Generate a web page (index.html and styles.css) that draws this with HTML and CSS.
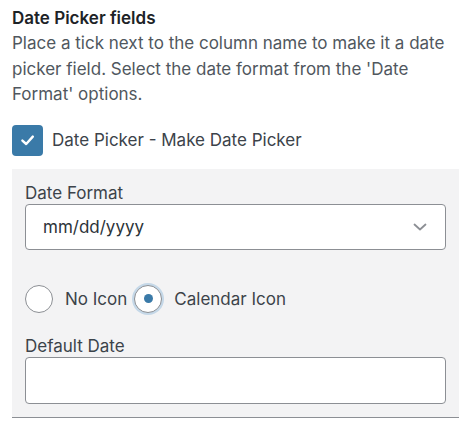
FILE: index.html
```html
<!DOCTYPE html>
<html>
<head>
<meta charset="utf-8">
<link rel="stylesheet" href="styles.css">
</head>
<body>
<div class="page">
  <h2 class="title">Date Picker fields</h2>
  <p class="desc">Place a tick next to the column name to make it a date picker field. Select the date format from the 'Date Format' options.</p>
  <label class="check-row">
    <span class="checkbox">
      <svg width="18" height="18" viewBox="0 0 18 18"><path d="M3.4 9.6 L7.2 13 L13.8 5.6" fill="none" stroke="#fff" stroke-width="2.4" stroke-linecap="round" stroke-linejoin="round"/></svg>
    </span>
    <span class="check-label">Date Picker - Make Date Picker</span>
  </label>
  <div class="panel">
    <div class="field-label">Date Format</div>
    <div class="select">
      <span class="select-value">mm/dd/yyyy</span>
      <svg class="chevron" width="14" height="8" viewBox="0 0 14 8"><path d="M1.5 1.5 L7 6.5 L12.5 1.5" fill="none" stroke="#8c8f94" stroke-width="1.8" stroke-linecap="round" stroke-linejoin="round"/></svg>
    </div>
    <div class="radios">
      <span class="radio"></span>
      <span class="radio-label">No Icon</span>
      <span class="radio checked"><span class="dot"></span></span>
      <span class="radio-label">Calendar Icon</span>
    </div>
    <div class="field-label">Default Date</div>
    <div class="input"></div>
  </div>
</div>
</body>
</html>
```

FILE: styles.css
```css
* { box-sizing: border-box; }
html, body { margin: 0; padding: 0; background: #fff; }
body { font-family: Inter, "Noto Sans", sans-serif; color: #3c434a; }
.page { padding: 7px 12px 0 12px; width: 474px; }
.title { margin: 0; font-size: 17px; font-weight: 600; line-height: 23px; color: #1d2327; }
.desc { margin: 1px 0 0 0; font-size: 17px; line-height: 25.5px; color: #50575e; width: 440px; }
.check-row { display: flex; align-items: center; gap: 9px; margin-top: 17px; }
.checkbox { width: 31px; height: 31px; background: #3a7aa8; border-radius: 4px; display: flex; align-items: center; justify-content: center; }
.check-label { font-size: 17px; color: #3c434a; }
.panel { margin-top: 13px; background: #f3f3f4; border-bottom: 1px solid #8c8f94; padding: 13px 13px 13px 13px; width: 447px; }
.field-label { font-size: 17px; line-height: 22px; color: #3c434a; }
.select { height: 46px; border: 1px solid #8c8f94; border-radius: 4px; background: #fff; display: flex; align-items: center; justify-content: space-between; padding: 0 18px 0 17px; }
.select-value { font-size: 17px; color: #2c3338; }
.radios { display: flex; align-items: center; margin-top: 35px; margin-bottom: 22px; height: 28px; }
.radio { width: 28px; height: 28px; border-radius: 50%; border: 1px solid #8c8f94; background: #fff; display: flex; align-items: center; justify-content: center; flex: none; }
.radio.checked { box-shadow: 0 0 0 2px #c5d8e8; margin-left: 7px; }
.dot { width: 9px; height: 9px; border-radius: 50%; background: #3a7aa8; }
.radio-label { font-size: 17px; color: #3c434a; margin-left: 12px; }
.input { height: 47px; border: 1px solid #8c8f94; border-radius: 4px; background: #fff; }
```
